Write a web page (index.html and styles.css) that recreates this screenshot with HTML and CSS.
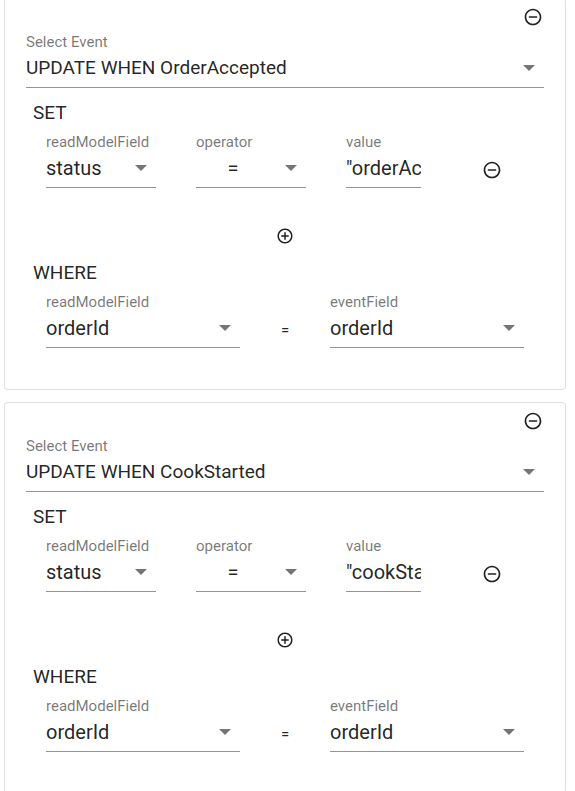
FILE: index.html
```html
<!DOCTYPE html>
<html lang="en">
<head>
<meta charset="utf-8">
<title>Read model updates</title>
<link rel="stylesheet" href="styles.css">
</head>
<body>
<div class="page">

  <section class="card">
    <div class="card-head">
      <button class="icon-btn icon-remove" aria-label="remove">
        <svg viewBox="0 0 24 24"><path d="M7 11v2h10v-2H7zm5-9C6.48 2 2 6.48 2 12s4.48 10 10 10 10-4.48 10-10S17.52 2 12 2zm0 18c-4.41 0-8-3.59-8-8s3.59-8 8-8 8 3.59 8 8-3.59 8-8 8z"/></svg>
      </button>
    </div>
    <div class="field field-event">
      <div class="field-label">Select Event</div>
      <div class="field-input">
        <span class="value event-value">UPDATE WHEN OrderAccepted</span>
        <svg class="arrow" viewBox="0 0 10 5"><path d="M0 0l5 5 5-5z"/></svg>
      </div>
    </div>

    <div class="section">
      <div class="section-title">SET</div>
      <div class="row set-row">
        <div class="field f-short">
          <div class="field-label">readModelField</div>
          <div class="field-input"><span class="value">status</span><svg class="arrow" viewBox="0 0 10 5"><path d="M0 0l5 5 5-5z"/></svg></div>
        </div>
        <div class="field f-short">
          <div class="field-label">operator</div>
          <div class="field-input"><span class="value centered">=</span><svg class="arrow" viewBox="0 0 10 5"><path d="M0 0l5 5 5-5z"/></svg></div>
        </div>
        <div class="field f-value">
          <div class="field-label">value</div>
          <div class="field-input"><span class="value clip">"orderAccepted"</span></div>
        </div>
        <button class="icon-btn icon-row-remove" aria-label="remove set">
          <svg viewBox="0 0 24 24"><path d="M7 11v2h10v-2H7zm5-9C6.48 2 2 6.48 2 12s4.48 10 10 10 10-4.48 10-10S17.52 2 12 2zm0 18c-4.41 0-8-3.59-8-8s3.59-8 8-8 8 3.59 8 8-3.59 8-8 8z"/></svg>
        </button>
      </div>
    </div>

    <div class="add-row">
      <button class="icon-btn icon-add" aria-label="add">
        <svg viewBox="0 0 24 24"><path d="M13 7h-2v4H7v2h4v4h2v-4h4v-2h-4V7zm-1-5C6.48 2 2 6.48 2 12s4.48 10 10 10 10-4.48 10-10S17.52 2 12 2zm0 18c-4.41 0-8-3.59-8-8s3.59-8 8-8 8 3.59 8 8-3.59 8-8 8z"/></svg>
      </button>
    </div>

    <div class="section section-where">
      <div class="section-title">WHERE</div>
      <div class="row where-row">
        <div class="field f-long">
          <div class="field-label">readModelField</div>
          <div class="field-input"><span class="value">orderId</span><svg class="arrow" viewBox="0 0 10 5"><path d="M0 0l5 5 5-5z"/></svg></div>
        </div>
        <div class="eq">=</div>
        <div class="field f-long">
          <div class="field-label">eventField</div>
          <div class="field-input"><span class="value">orderId</span><svg class="arrow" viewBox="0 0 10 5"><path d="M0 0l5 5 5-5z"/></svg></div>
        </div>
      </div>
    </div>
  </section>

  <section class="card">
    <div class="card-head">
      <button class="icon-btn icon-remove" aria-label="remove">
        <svg viewBox="0 0 24 24"><path d="M7 11v2h10v-2H7zm5-9C6.48 2 2 6.48 2 12s4.48 10 10 10 10-4.48 10-10S17.52 2 12 2zm0 18c-4.41 0-8-3.59-8-8s3.59-8 8-8 8 3.59 8 8-3.59 8-8 8z"/></svg>
      </button>
    </div>
    <div class="field field-event">
      <div class="field-label">Select Event</div>
      <div class="field-input">
        <span class="value event-value">UPDATE WHEN CookStarted</span>
        <svg class="arrow" viewBox="0 0 10 5"><path d="M0 0l5 5 5-5z"/></svg>
      </div>
    </div>

    <div class="section">
      <div class="section-title">SET</div>
      <div class="row set-row">
        <div class="field f-short">
          <div class="field-label">readModelField</div>
          <div class="field-input"><span class="value">status</span><svg class="arrow" viewBox="0 0 10 5"><path d="M0 0l5 5 5-5z"/></svg></div>
        </div>
        <div class="field f-short">
          <div class="field-label">operator</div>
          <div class="field-input"><span class="value centered">=</span><svg class="arrow" viewBox="0 0 10 5"><path d="M0 0l5 5 5-5z"/></svg></div>
        </div>
        <div class="field f-value">
          <div class="field-label">value</div>
          <div class="field-input"><span class="value clip">"cookStarted"</span></div>
        </div>
        <button class="icon-btn icon-row-remove" aria-label="remove set">
          <svg viewBox="0 0 24 24"><path d="M7 11v2h10v-2H7zm5-9C6.48 2 2 6.48 2 12s4.48 10 10 10 10-4.48 10-10S17.52 2 12 2zm0 18c-4.41 0-8-3.59-8-8s3.59-8 8-8 8 3.59 8 8-3.59 8-8 8z"/></svg>
        </button>
      </div>
    </div>

    <div class="add-row">
      <button class="icon-btn icon-add" aria-label="add">
        <svg viewBox="0 0 24 24"><path d="M13 7h-2v4H7v2h4v4h2v-4h4v-2h-4V7zm-1-5C6.48 2 2 6.48 2 12s4.48 10 10 10 10-4.48 10-10S17.52 2 12 2zm0 18c-4.41 0-8-3.59-8-8s3.59-8 8-8 8 3.59 8 8-3.59 8-8 8z"/></svg>
      </button>
    </div>

    <div class="section section-where">
      <div class="section-title">WHERE</div>
      <div class="row where-row">
        <div class="field f-long">
          <div class="field-label">readModelField</div>
          <div class="field-input"><span class="value">orderId</span><svg class="arrow" viewBox="0 0 10 5"><path d="M0 0l5 5 5-5z"/></svg></div>
        </div>
        <div class="eq">=</div>
        <div class="field f-long">
          <div class="field-label">eventField</div>
          <div class="field-input"><span class="value">orderId</span><svg class="arrow" viewBox="0 0 10 5"><path d="M0 0l5 5 5-5z"/></svg></div>
        </div>
      </div>
    </div>
  </section>

</div>
</body>
</html>
```

FILE: styles.css
```css
* { box-sizing: border-box; }

html, body {
  margin: 0;
  padding: 0;
  background: #ffffff;
}

body {
  font-family: Roboto, "Liberation Sans", Arial, sans-serif;
  color: rgba(0, 0, 0, 0.87);
  overflow: hidden;
}

.page {
  display: flex;
  flex-direction: column;
  gap: 12px;
  margin-top: -2px;
  padding: 0 9px 0 4px;
}

.card {
  border: 1px solid rgba(0, 0, 0, 0.12);
  border-radius: 4px;
  padding: 8px 21px 41px;
  background: #fff;
}

.card-head {
  display: flex;
  justify-content: flex-end;
  height: 20px;
}

.icon-btn {
  border: 0;
  padding: 0;
  margin: 0;
  background: transparent;
  display: flex;
  align-items: center;
  justify-content: center;
  color: rgba(0, 0, 0, 0.87);
  cursor: pointer;
}

.icon-btn svg {
  width: 100%;
  height: 100%;
  fill: currentColor;
  display: block;
}

.icon-remove {
  width: 20px;
  height: 20px;
  margin-right: 1px;
}

.field {
  display: flex;
  flex-direction: column;
}

.field-event {
  margin-top: 6px;
}

.field-label {
  font-size: 15px;
  line-height: 18px;
  color: rgba(0, 0, 0, 0.54);
  white-space: nowrap;
}

.field-input {
  display: flex;
  align-items: center;
  padding: 7px 0 9px;
  border-bottom: 1px solid rgba(0, 0, 0, 0.42);
  overflow: hidden;
}

.value {
  flex: 1;
  font-size: 20px;
  line-height: 20px;
  white-space: nowrap;
}

.value.event-value {
  font-size: 19px;
}

.value.centered {
  text-align: center;
  padding-right: 15px;
}

.value.clip {
  overflow: hidden;
}

.arrow {
  width: 12px;
  height: 6px;
  flex: none;
  margin-right: 9px;
  fill: rgba(0, 0, 0, 0.54);
}

.section {
  padding-left: 7px;
  margin-top: 13px;
}

.section-where {
  margin-top: 15px;
}

.section-title {
  font-size: 19px;
  line-height: 24px;
}

.row {
  display: flex;
  margin-top: 8px;
  padding-left: 13px;
}

.f-short {
  width: 110px;
  margin-right: 40px;
}

.f-value {
  width: 75px;
}

.icon-row-remove {
  width: 20px;
  height: 20px;
  align-self: flex-end;
  margin: 0 0 8px 61px;
}

.add-row {
  display: flex;
  justify-content: center;
  margin-top: 38px;
}

.icon-add {
  width: 18px;
  height: 18px;
  margin: 1px 0;
}

.f-long {
  width: 194px;
}

.eq {
  width: 90px;
  align-self: flex-end;
  text-align: center;
  font-size: 15px;
  line-height: 18px;
  margin-bottom: 9px;
}
```
